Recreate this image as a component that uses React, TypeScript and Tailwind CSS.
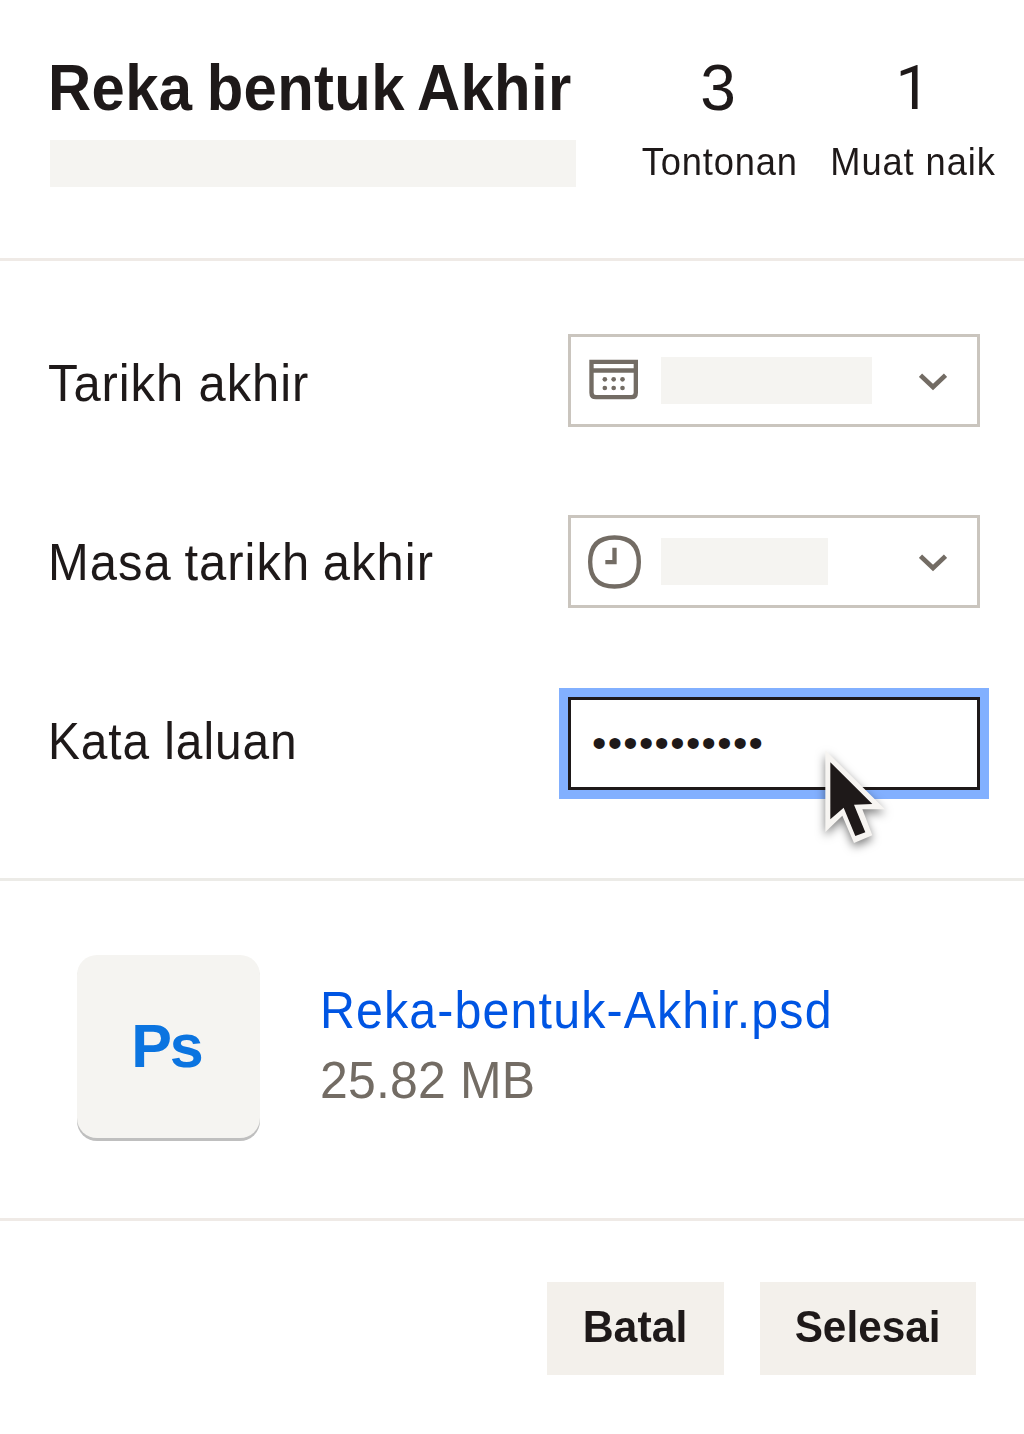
import React from 'react';

const CalendarIcon: React.FC = () => (
  <svg className="h-[54px] w-[54px] shrink-0" viewBox="84 103 162 162" fill="none">
    <path
      d="M94.500 126.500H227.500V219Q227.500 232.500 214 232.500H108Q94.500 232.500 94.500 219Z"
      stroke="#736c64"
      strokeWidth="13"
    />
    <path d="M94 152.500H228" stroke="#736c64" strokeWidth="13" />
    <g fill="#736c64">
      <circle cx="134.500" cy="179" r="7" />
      <circle cx="161" cy="179" r="7" />
      <circle cx="187.500" cy="179" r="7" />
      <circle cx="134.500" cy="205" r="7" />
      <circle cx="161" cy="205" r="7" />
      <circle cx="187.500" cy="205" r="7" />
    </g>
  </svg>
);

const ClockIcon: React.FC = () => (
  <svg className="h-[54px] w-[54px] shrink-0" viewBox="84 104 162 162" fill="none">
    <path
      d="M163.500 111.500C212 111.500 236.500 136 236.500 185C236.500 234 212 258.500 163.500 258.500C115 258.500 90.500 234 90.500 185C90.500 136 115 111.500 163.500 111.500Z"
      stroke="#736c64"
      strokeWidth="13"
    />
    <path d="M163.500 142V185.500H136" stroke="#736c64" strokeWidth="13" />
  </svg>
);

const Chevron: React.FC = () => (
  <svg className="mt-[3px] h-[18px] w-[28px] shrink-0" viewBox="0 0 28 18" fill="none">
    <path d="M1.500 2.200L14 14L26.500 2.200" stroke="#736c64" strokeWidth="4.600" />
  </svg>
);

const Cursor: React.FC = () => (
  <svg
    className="absolute top-[44px] left-[246px] h-[110px] w-[80px] overflow-visible drop-shadow-[0_4px_5px_rgba(0,0,0,0.5)]"
    viewBox="800 190 240 330"
  >
    <path d="M825 209L1004 386H936L966 464L911 487L876 405L825 454Z" fill="#f7f5f2" />
    <path d="M840 245L966 370L911 372L945 455L915 466L880 381L840 416Z" fill="#1e1919" />
  </svg>
);

const SelectBox: React.FC<{ icon: React.ReactNode; children: React.ReactNode }> = ({ icon, children }) => (
  <div className="flex h-[93px] w-[412px] shrink-0 items-center border-[3px] border-[#cac5be] pr-[30px] pl-[17px]">
    {icon}
    <div className="ml-[19px] flex-1">{children}</div>
    <Chevron />
  </div>
);

export default function App() {
  return (
    <div className="h-[1434px] w-[1024px] overflow-hidden bg-white font-['Liberation_Sans',sans-serif] text-[#1e1919]">
      {/* Header */}
      <header className="flex h-[261px] items-start border-b-[3px] border-[#efeae6] pt-[56px] pl-[50px]">
        <div className="w-[526px]">
          <h1 className="-ml-[2px] origin-left scale-x-[0.92] text-[65px] leading-[64px] font-bold tracking-[0.4px] [word-spacing:-3px] whitespace-nowrap">
            Reka bentuk Akhir
          </h1>
          <div className="mt-[20px] h-[47px] bg-[#f5f4f1]" />
        </div>
        <div className="ml-[66px] flex w-[156px] flex-col items-center whitespace-nowrap">
          <span className="-ml-[4px] text-[64px] leading-[64px]">3</span>
          <span className="mt-[22px] scale-x-[0.93] text-[39px] leading-[40px] tracking-[0.9px]">Tontonan</span>
        </div>
        <div className="ml-[32px] flex w-[166px] flex-col items-center whitespace-nowrap">
          <span className="font-[Roboto,sans-serif] text-[62px] leading-[64px]">1</span>
          <span className="mt-[22px] scale-x-[0.93] text-[39px] leading-[40px] tracking-[1px]">Muat naik</span>
        </div>
      </header>

      {/* Settings */}
      <section className="flex h-[620px] flex-col border-b-[3px] border-[#ecebe7] pt-[73px] pr-[44px] pl-[48px] text-[52px] leading-[52px] whitespace-nowrap">
        <div className="flex items-start justify-between">
          <span className="mt-[23px] origin-left scale-x-[0.94] tracking-[1px]">Tarikh akhir</span>
          <SelectBox icon={<CalendarIcon />}>
            <div className="h-[47px] w-[211px] bg-[#f5f4f1]" />
          </SelectBox>
        </div>
        <div className="mt-[88px] flex items-start justify-between">
          <span className="mt-[21px] origin-left scale-x-[0.94] tracking-[1.1px] [word-spacing:-2px]">Masa tarikh akhir</span>
          <SelectBox icon={<ClockIcon />}>
            <div className="h-[47px] w-[167px] bg-[#f5f4f1]" />
          </SelectBox>
        </div>
        <div className="mt-[89px] flex items-start justify-between">
          <span className="mt-[18px] origin-left scale-x-[0.92] tracking-[1px]">Kata laluan</span>
          <div className="relative flex h-[93px] w-[412px] items-center border-[3px] border-[#1e1919] pl-[21px] ring-[9px] ring-[#82b0ff]">
            <span className="text-[41px] leading-[41px] tracking-[1.3px]">•••••••••••</span>
            <Cursor />
          </div>
        </div>
      </section>

      {/* File */}
      <section className="flex h-[340px] items-start border-b-[3px] border-[#efeae6] pt-[74px] pl-[77px]">
        <div className="flex h-[183px] w-[183px] items-center justify-center rounded-[20px] bg-[#f5f4f1] shadow-[0_3px_0_#bfbfbf]">
          <span className="-ml-[4px] text-[61px] leading-[61px] font-bold tracking-[-2px] text-[#0b74e0]">Ps</span>
        </div>
        <div className="mt-[20px] ml-[60px] flex flex-col items-start text-[52px] leading-[70px] whitespace-nowrap">
          <span className="origin-left scale-x-[0.93] tracking-[1.2px] text-[#0055e3]">Reka-bentuk-Akhir.psd</span>
          <span className="origin-left scale-x-[0.96] tracking-[0.2px] text-[#736c64]">25.82 MB</span>
        </div>
      </section>

      {/* Actions */}
      <footer className="flex justify-end gap-[36px] pt-[61px] pr-[48px] text-[45px] leading-[44px] font-bold">
        <button className="h-[93px] w-[177px] bg-[#f3f0eb] pb-[4px]">
          <span className="inline-block scale-x-[0.95]">Batal</span>
        </button>
        <button className="h-[93px] w-[216px] bg-[#f3f0eb] pb-[4px]">
          <span className="inline-block scale-x-[0.94]">Selesai</span>
        </button>
      </footer>
    </div>
  );
}
